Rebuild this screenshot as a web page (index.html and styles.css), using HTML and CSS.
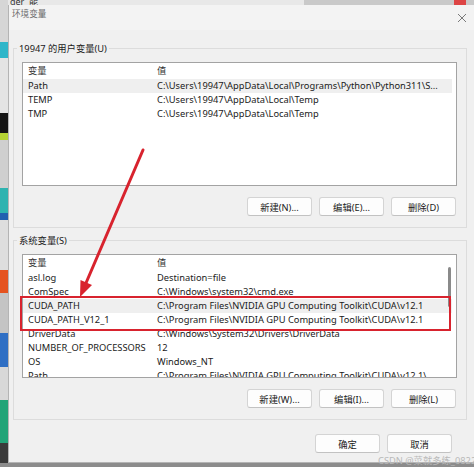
FILE: index.html
```html
<!DOCTYPE html>
<html lang="zh-CN">
<head>
    <meta charset="UTF-8">
    <title>环境变量</title>
    <link rel="stylesheet" href="styles.css">
</head>
<body>
  <div class="screen">
    <div class="desk-strip"></div>
    <div class="main">
      <div class="taskbar"><span class="task-text">ger &nbsp;能</span><span class="task-right"></span></div>

      <div class="dialog">
        <div class="titlebar">
          <span class="title">环境变量</span>
          <svg class="close" width="10" height="10" viewBox="0 0 10 10">
            <path d="M1 1 L9 9 M9 1 L1 9" stroke="#7a7a7a" stroke-width="1" fill="none"/>
          </svg>
        </div>

        <div class="content">
          <!-- 用户变量 -->
          <fieldset class="group">
            <legend>19947 的用户变量(U)</legend>
            <div class="list">
              <div class="row head"><span>变量</span><span>值</span></div>
              <div class="row selected"><span>Path</span><span>C:\Users\19947\AppData\Local\Programs\Python\Python311\S...</span></div>
              <div class="row"><span>TEMP</span><span>C:\Users\19947\AppData\Local\Temp</span></div>
              <div class="row"><span>TMP</span><span>C:\Users\19947\AppData\Local\Temp</span></div>
            </div>
            <div class="buttons">
              <button class="btn">新建(N)...</button>
              <button class="btn">编辑(E)...</button>
              <button class="btn">删除(D)</button>
            </div>
          </fieldset>

          <!-- 系统变量 -->
          <fieldset class="group system">
            <legend>系统变量(S)</legend>
            <div class="list">
              <div class="row head"><span>变量</span><span>值</span></div>
              <div class="row"><span>asl.log</span><span>Destination=file</span></div>
              <div class="row"><span>ComSpec</span><span>C:\Windows\system32\cmd.exe</span></div>
              <div class="row selected"><span>CUDA_PATH</span><span>C:\Program Files\NVIDIA GPU Computing Toolkit\CUDA\v12.1</span></div>
              <div class="row"><span>CUDA_PATH_V12_1</span><span>C:\Program Files\NVIDIA GPU Computing Toolkit\CUDA\v12.1</span></div>
              <div class="row"><span>DriverData</span><span>C:\Windows\System32\Drivers\DriverData</span></div>
              <div class="row"><span>NUMBER_OF_PROCESSORS</span><span>12</span></div>
              <div class="row"><span>OS</span><span>Windows_NT</span></div>
              <div class="row"><span>Path</span><span>C:\Program Files\NVIDIA GPU Computing Toolkit\CUDA\v12.1\...</span></div>
              <div class="thumb"></div>
            </div>
            <div class="buttons">
              <button class="btn">新建(W)...</button>
              <button class="btn">编辑(I)...</button>
              <button class="btn">删除(L)</button>
            </div>
          </fieldset>

          <div class="footer">
            <button class="btn">确定</button>
            <button class="btn">取消</button>
          </div>
        </div>
      </div>
    </div>

    <!-- 标注：红框和箭头 -->
    <svg class="annot" width="474" height="467" viewBox="0 0 474 467">
      <rect x="21" y="297" width="429" height="33" fill="none" stroke="#d8232e" stroke-width="2"/>
      <line x1="143" y1="150" x2="86" y2="283" stroke="#d8232e" stroke-width="3" stroke-linecap="round"/>
      <polygon points="80,297 92,285 80.5,280" fill="#d8232e"/>
    </svg>

    <div class="watermark">CSDN @菜就多练_0822</div>
  </div>
</body>
</html>
```

FILE: styles.css
```css
/* Базовые настройки */
* { box-sizing: border-box; }

body {
    margin: 0;
    width: 474px;
    height: 467px;
    overflow: hidden;
    background: #8c8c8c;
    font-family: "Noto Sans", "Noto Sans CJK SC", sans-serif;
    font-size: 9.3px;
    color: #1a1a1a;
}

.screen {
    position: relative;
    display: flex;
    height: 463px;
}

/* Полоска рабочего стола слева */
.desk-strip {
    width: 8px;
    flex: none;
    background: linear-gradient(to bottom,
        #d6d6d6 0, #d6d6d6 42px,
        #2fb6c9 42px, #2fb6c9 58px,
        #e4e4e4 58px, #e4e4e4 113px,
        #141414 113px, #141414 133px,
        #b5d334 133px, #b5d334 140px,
        #cfcfcf 140px, #cfcfcf 188px,
        #2fb3b0 188px, #2fb3b0 213px,
        #2260b0 213px, #2260b0 220px,
        #dedede 220px, #dedede 270px,
        #e5531f 270px, #e5531f 293px,
        #c4c4c4 293px, #c4c4c4 333px,
        #2f6fc4 333px, #2f6fc4 367px,
        #d8d8d8 367px, #d8d8d8 400px,
        #22a478 400px, #22a478 443px,
        #3a3a3a 443px);
}

.main {
    flex: 1;
    min-width: 0;
    display: flex;
    flex-direction: column;
}

.taskbar {
    height: 5px;
    display: flex;
    background: #e8e8e8;
    overflow: hidden;
}

.task-text {
    font-size: 9px;
    line-height: 4px;
    color: #333;
    margin-left: 2px;
}

.task-right {
    margin-left: auto;
    width: 170px;
    background: linear-gradient(to right, #c9c9c9 0, #c9c9c9 150px, #d44 150px, #d44 162px, #c9c9c9 162px);
}

/* Окно */
.dialog {
    flex: 1;
    display: flex;
    flex-direction: column;
    background: #f0f0f0;
    border-left: 1px solid #b4b4b4;
    border-bottom: 1px solid #b4b4b4;
}

.titlebar {
    height: 25px;
    display: flex;
    align-items: flex-start;
    justify-content: space-between;
    padding: 3px 7px 0 3px;
    background: #f3f3f3;
}

.title {
    font-size: 8.6px;
    line-height: 12px;
    color: #6e6e6e;
}

.close {
    margin-top: 5px;
}

.content {
    padding: 0 7px 0 4px;
}

/* Группы */
.group {
    margin: 12px 0 0;
    padding: 7px 9px 11px 8px;
    border: 1px solid #dcdcdc;
    min-width: 0;
}

.group.system {
    margin-top: 6px;
}

.group legend {
    margin-left: -5px;
    padding: 0 2px;
    line-height: 13px;
}

.list {
    position: relative;
    height: 124px;
    padding-right: 4px;
    background: #fff;
    border: 1px solid #a3a3a3;
    overflow: hidden;
}

.row {
    display: grid;
    grid-template-columns: 129px minmax(0, 1fr);
    height: 14px;
    line-height: 14px;
    padding-left: 5px;
    white-space: nowrap;
    overflow: hidden;
}

.row.head {
    height: 16px;
    line-height: 16px;
    color: #333;
}

.row.selected {
    background: #efefef;
}

.thumb {
    position: absolute;
    top: 12px;
    left: 425px;
    width: 3px;
    height: 40px;
    border-radius: 2px;
    background: #8a8a8a;
}

.buttons {
    display: flex;
    justify-content: flex-end;
    gap: 7px;
    margin-top: 11px;
    padding-right: 1px;
}

.btn {
    width: 65px;
    height: 19px;
    padding: 0;
    font: inherit;
    color: #1a1a1a;
    background: #fdfdfd;
    border: 1px solid #d4d4d4;
    border-bottom-color: #c2c2c2;
    border-radius: 3px;
}

.footer {
    display: flex;
    justify-content: flex-end;
    gap: 7px;
    margin-top: 14px;
    padding-right: 15px;
}

/* Аннотации поверх окна */
.annot {
    position: absolute;
    top: 0;
    left: 0;
    pointer-events: none;
}

.watermark {
    position: absolute;
    left: 378px;
    top: 453px;
    font-size: 9.3px;
    color: #b9b9b9;
    white-space: nowrap;
}
```
